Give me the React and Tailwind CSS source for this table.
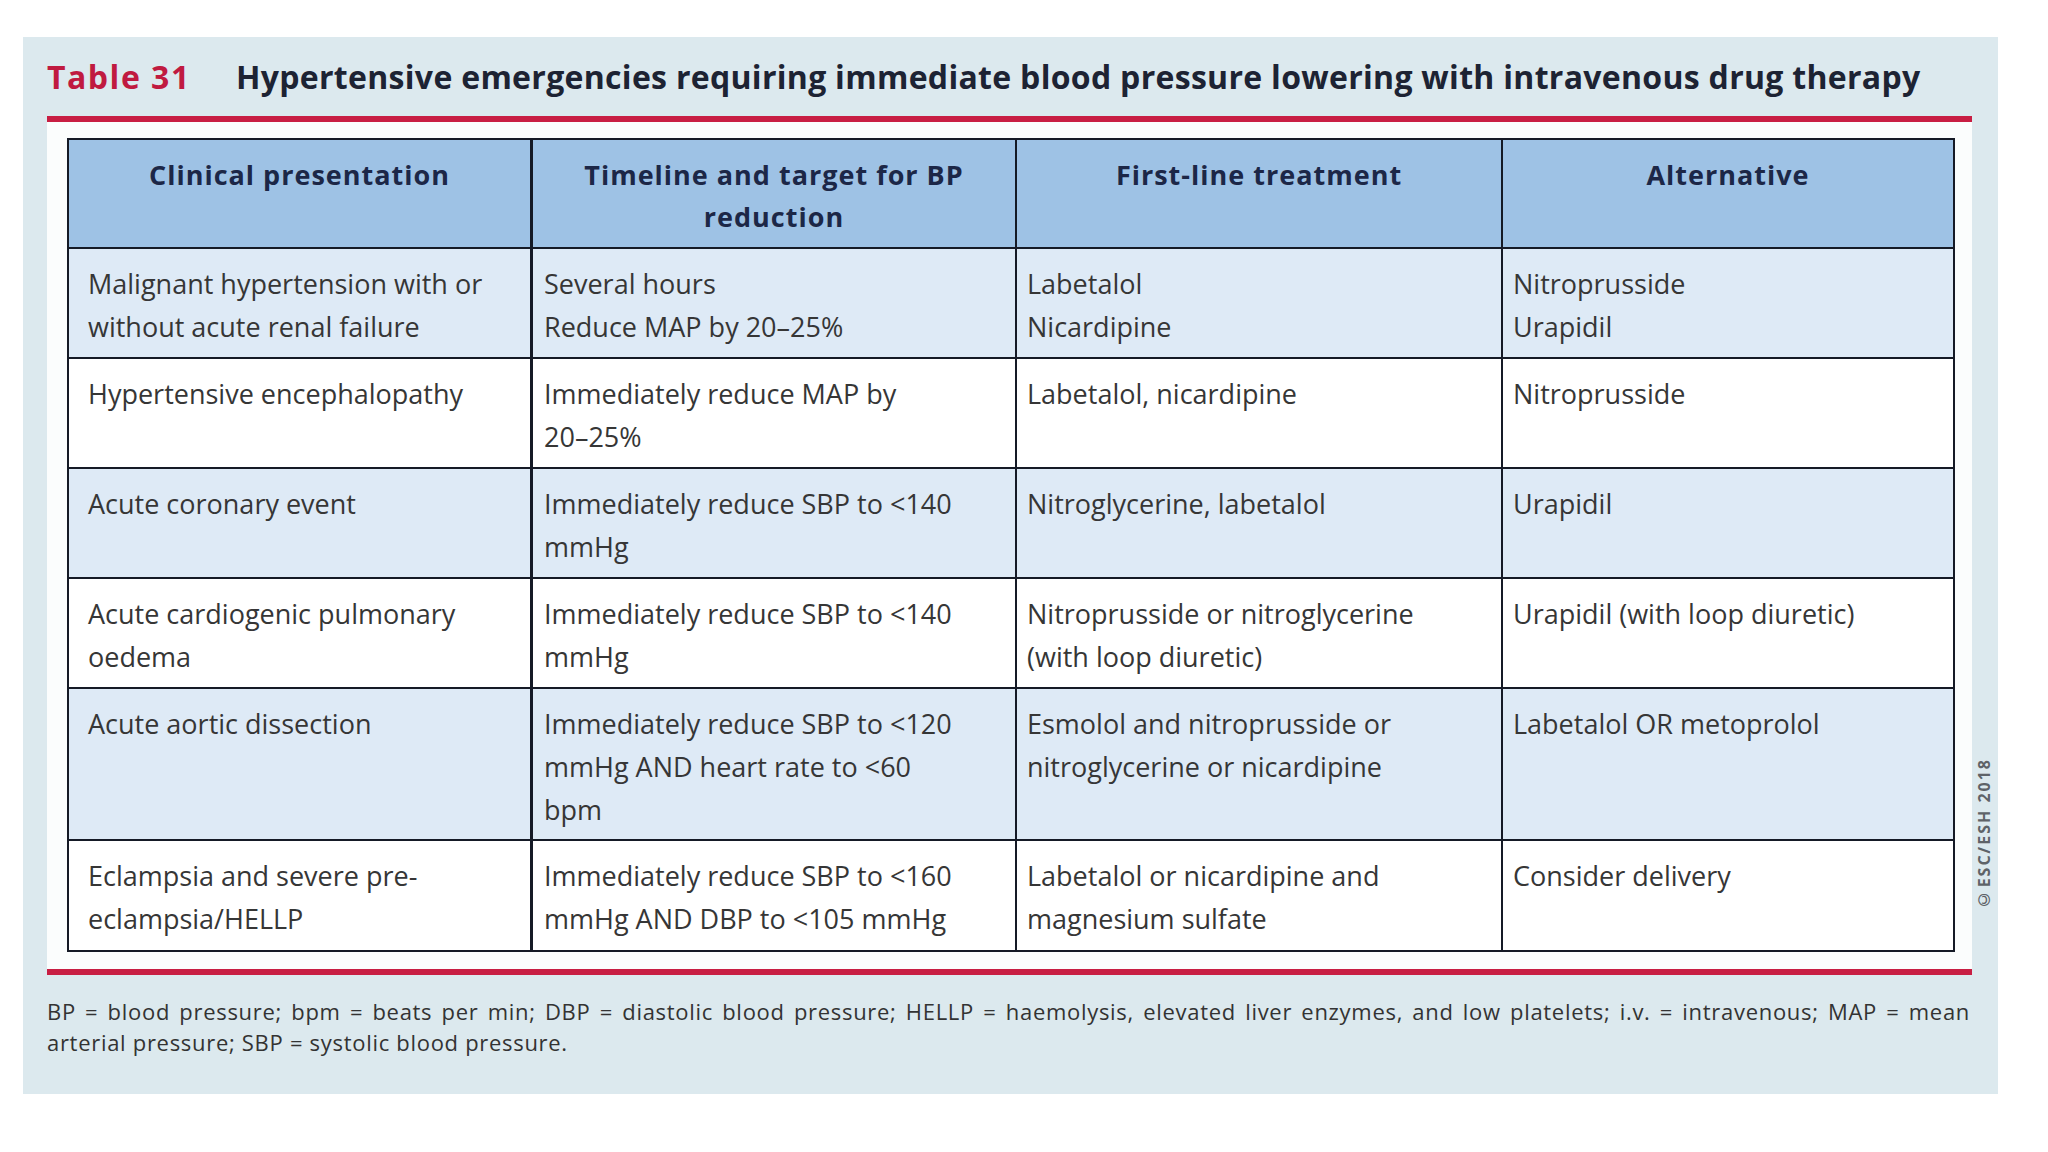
import React from "react";

const LIGHT = "bg-[#deeaf6]";
const WHITE = "bg-white";

const rows = [
  {
    bg: LIGHT,
    cells: [
      ["Malignant hypertension with or", "without acute renal failure"],
      ["Several hours", "Reduce MAP by 20–25%"],
      ["Labetalol", "Nicardipine"],
      ["Nitroprusside", "Urapidil"],
    ],
  },
  {
    bg: WHITE,
    cells: [
      ["Hypertensive encephalopathy"],
      ["Immediately reduce MAP by", "20–25%"],
      ["Labetalol, nicardipine"],
      ["Nitroprusside"],
    ],
  },
  {
    bg: LIGHT,
    cells: [
      ["Acute coronary event"],
      ["Immediately reduce SBP to <140", "mmHg"],
      ["Nitroglycerine, labetalol"],
      ["Urapidil"],
    ],
  },
  {
    bg: WHITE,
    cells: [
      ["Acute cardiogenic pulmonary", "oedema"],
      ["Immediately reduce SBP to <140", "mmHg"],
      ["Nitroprusside or nitroglycerine", "(with loop diuretic)"],
      ["Urapidil (with loop diuretic)"],
    ],
  },
  {
    bg: LIGHT,
    cells: [
      ["Acute aortic dissection"],
      ["Immediately reduce SBP to <120", "mmHg AND heart rate to <60", "bpm"],
      ["Esmolol and nitroprusside or", "nitroglycerine or nicardipine"],
      ["Labetalol OR metoprolol"],
    ],
  },
  {
    bg: WHITE,
    cells: [
      ["Eclampsia and severe pre-", "eclampsia/HELLP"],
      ["Immediately reduce SBP to <160", "mmHg AND DBP to <105 mmHg"],
      ["Labetalol or nicardipine and", "magnesium sulfate"],
      ["Consider delivery"],
    ],
  },
];

const headers = [
  ["Clinical presentation"],
  ["Timeline and target for BP", "reduction"],
  ["First-line treatment"],
  ["Alternative"],
];

const colCls = [
  "pl-[19px] border-r-[3px]",
  "pl-[11px] border-r-2",
  "pl-[10px] border-r-2",
  "pl-[10px] border-r-2",
];

export default function App() {
  return (
    <div className="w-[2048px] h-[1152px] bg-white pt-[37px] pl-[23px] font-['Open_Sans',sans-serif]">
      <div className="relative w-[1975px] h-[1057px] bg-[#dce9ee] pt-[20px]">
        {/* Title */}
        <div className="flex items-center h-[40px] pl-[24px] whitespace-nowrap">
          <span className="w-[189px] text-[32px] font-bold tracking-[1.5px] text-[#c01a40] leading-[40px]">
            Table 31
          </span>
          <span className="text-[32px] font-bold tracking-[0.3px] text-[#1d2333] leading-[40px]">
            Hypertensive emergencies requiring immediate blood pressure lowering with intravenous drug therapy
          </span>
        </div>

        <div className="mt-[19px] ml-[24px] w-[1925px] h-[6px] bg-[#c81e43]" />

        {/* Table box */}
        <div className="ml-[24px] w-[1925px] bg-[#fbfdfd] pt-[16px] pb-[17px] pl-[20px]">
          <div className="grid grid-cols-[464px_484px_486px_452px] grid-rows-[109px_110px_110px_110px_110px_152px_111px] w-[1888px] border-l-2 border-t-2 border-[#151a26]">
            {headers.map((lines, i) => (
              <div
                key={"h" + i}
                className={
                  "bg-[#9ec2e5] border-b-2 border-[#151a26] pt-[14px] text-center text-[27px] tracking-[1px] leading-[42px] font-bold text-[#1c2747] whitespace-nowrap " +
                  (i === 0 ? "border-r-[3px]" : "border-r-2")
                }
              >
                {lines.map((l, j) => (
                  <div key={j}>{l}</div>
                ))}
              </div>
            ))}
            {rows.map((row, r) =>
              row.cells.map((lines, c) => (
                <div
                  key={r + "-" + c}
                  className={
                    row.bg +
                    " border-b-2 border-[#151a26] pt-[13px] text-[27px] leading-[43px] text-[#363636] whitespace-nowrap " +
                    colCls[c]
                  }
                >
                  {lines.map((l, j) => (
                    <div key={j}>{l}</div>
                  ))}
                </div>
              ))
            )}
          </div>
        </div>

        <div className="ml-[24px] w-[1925px] h-[6px] bg-[#c81e43]" />

        {/* Footnote */}
        <div className="mt-[21px] ml-[24px] w-[1923px] text-[22px] tracking-[0.7px] leading-[31px] text-[#333333]">
          <div className="whitespace-nowrap text-justify [text-align-last:justify]">
            BP = blood pressure; bpm = beats per min; DBP = diastolic blood pressure; HELLP = haemolysis, elevated liver enzymes, and low platelets; i.v. = intravenous; MAP = mean
          </div>
          <div className="whitespace-nowrap">arterial pressure; SBP = systolic blood pressure.</div>
        </div>

        {/* Copyright vertical */}
        <div className="absolute left-[1951px] top-[720px] w-[20px] h-[156px] flex items-center justify-center">
          <span className="[writing-mode:vertical-rl] rotate-180 text-[16px] leading-[20px] font-bold tracking-[2px] text-[#5e6368] whitespace-nowrap">
            ©ESC/ESH 2018
          </span>
        </div>
      </div>
    </div>
  );
}
